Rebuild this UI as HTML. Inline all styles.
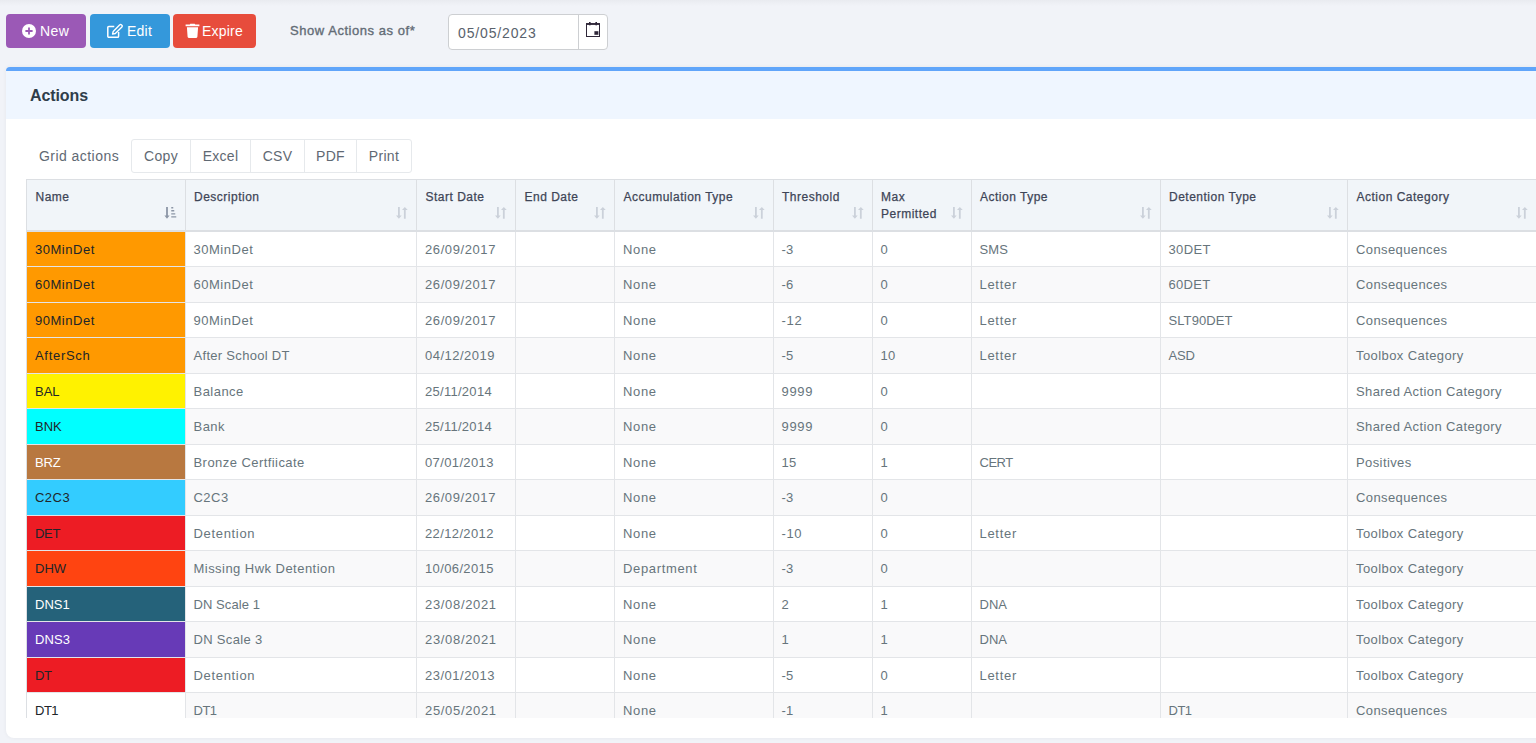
<!DOCTYPE html>
<html lang="en">
<head>
<meta charset="utf-8">
<title>Actions</title>
<style>
*{box-sizing:border-box}
html,body{margin:0;padding:0}
body{width:1536px;height:743px;overflow:hidden;background:#f1f3f8;font-family:"Liberation Sans",Arial,sans-serif;font-size:13px;color:#67757c;position:relative}
.topshade{position:absolute;left:0;top:0;width:1536px;height:6px;background:linear-gradient(#e9ebf0,#f1f3f8)}
.btn{position:absolute;top:14px;height:34px;border-radius:4px;color:#fff;font-size:14px;line-height:34px;white-space:nowrap}
.btn svg{position:absolute}
.btn span{position:absolute;top:0}
#bnew{left:6px;width:80px;background:#9b59b6}
#bedit{left:90px;width:80px;background:#3498db}
#bexp{left:173px;width:83px;background:#e74c3c}
.lbl{position:absolute;left:290px;top:22px;font-size:13px;line-height:18px;color:#636c76;-webkit-text-stroke:0.35px #636c76;letter-spacing:0.55px}
.date{position:absolute;left:448px;top:14px;width:160px;height:36px;background:#fff;border:1px solid #cdcfd2;border-radius:4px}
.date .v{position:absolute;left:9px;top:0;line-height:36px;font-size:14px;color:#59626c;letter-spacing:0.85px}
.date .sep{position:absolute;left:129px;top:0;width:1px;height:34px;background:#cdcfd2}
.date svg{position:absolute;left:136px;top:6px}
.card{position:absolute;left:6px;top:67px;width:1600px;height:671px;background:#fff;border-top:4px solid #60a5fa;box-shadow:0 0 4px rgba(0,0,0,0.05);border-radius:4px 0 0 8px;overflow:hidden}
.chead{position:absolute;left:0;top:0;width:100%;height:48px;background:#eff6ff}
.chead b{position:absolute;left:24px;top:15px;font-size:16px;line-height:20px;color:#2f3d4a;letter-spacing:-0.1px}
.ga{position:absolute;left:39px;top:139px;line-height:34px;font-size:14px;color:#5f6973;letter-spacing:0.45px}
.gbtns{position:absolute;left:131px;top:139px;height:34px;display:flex;border:1px solid #e6e9ec;border-radius:3px;background:#fff}
.gbtns div{height:32px;line-height:32px;font-size:14px;color:#5f6973;text-align:center;border-left:1px solid #e6e9ec;letter-spacing:0.3px}
.gbtns div:first-child{border-left:0}
.twrap{position:absolute;left:26px;top:179px;width:1520px;height:539px;overflow:hidden}
table.grid{border-collapse:separate;border-spacing:0;table-layout:fixed;width:1511px;border-left:1px solid #dcdfe3;border-top:1px solid #dcdfe3}
.grid th{position:relative;height:51.5px;background:#f1f5f9;border-right:1px solid #dcdfe3;border-bottom:2px solid #dcdfe3;text-align:left;vertical-align:top;padding:9px 8px 0 8.5px;font-size:12px;line-height:17px;color:#3e4557;font-weight:normal;-webkit-text-stroke:0.25px #3e4557;letter-spacing:0.5px}
.grid th .srt{position:absolute;right:8px;bottom:10.5px}
.grid th:first-child .srt{right:7.4px}
.grid td{height:35.5px;border-right:1px solid #e3e5e8;border-bottom:1px solid #e3e5e8;padding:1px 8px 0 8px;font-size:13px;line-height:33.5px;white-space:nowrap;overflow:hidden;color:#67757c;letter-spacing:0.25px}
.grid tbody tr:nth-child(even) td{background:#f9f9fa}
</style>
</head>
<body>
<div class="topshade"></div>
<div class="btn" id="bnew"><svg width="14" height="14" viewBox="0 0 14 14" style="left:16px;top:10px"><circle cx="7" cy="7" r="7" fill="#fff"/><path d="M7 3.4v7.2M3.4 7h7.2" stroke="#9b59b6" stroke-width="1.8"/></svg><span style="left:34px;letter-spacing:0.4px">New</span></div>
<div class="btn" id="bedit"><svg width="18" height="16" viewBox="0 0 18 16" style="left:17px;top:9px"><path d="M11.6 9v4.2a1.1 1.1 0 0 1-1.1 1.1h-8.6a1.1 1.1 0 0 1-1.1-1.1v-8.6a1.1 1.1 0 0 1 1.1-1.1h5.4" fill="none" stroke="#fff" stroke-width="1.5"/><path d="M5.6 11l.6-2.6 6.6-6.6a1.1 1.1 0 0 1 1.6 0l.5.5a1.1 1.1 0 0 1 0 1.6l-6.6 6.6z" fill="none" stroke="#fff" stroke-width="1.4" stroke-linejoin="round"/></svg><span style="left:37px;letter-spacing:0.25px">Edit</span></div>
<div class="btn" id="bexp"><svg width="15" height="15" viewBox="0 0 15 15" style="left:12px;top:9px"><path d="M0.6 1.6h4.2l.5-.9h4.4l.5.9h4.2v1.7h-13.8zM1.9 4.3h11.2l-.7 9.5a1.2 1.2 0 0 1-1.2 1.1h-7.4a1.2 1.2 0 0 1-1.2-1.1z" fill="#fff"/></svg><span style="left:29px;letter-spacing:0.2px">Expire</span></div>
<div class="lbl">Show Actions as of*</div>
<div class="date"><div class="v">05/05/2023</div><div class="sep"></div>
<svg width="16" height="17" viewBox="0 0 16 17"><rect x="1.5" y="2.7" width="13" height="12.8" fill="none" stroke="#2e2638" stroke-width="1"/><rect x="1" y="2.2" width="14" height="1.7" fill="#2e2638"/><rect x="4" y="1" width="1.6" height="3.3" fill="#2e2638"/><rect x="10.4" y="1" width="1.6" height="3.3" fill="#2e2638"/><rect x="9.4" y="10.2" width="4" height="3.6" fill="#2e2638"/></svg></div>
<div class="card"><div class="chead"><b>Actions</b></div></div>
<div class="ga">Grid actions</div>
<div class="gbtns"><div style="width:58px">Copy</div><div style="width:60px">Excel</div><div style="width:54px">CSV</div><div style="width:52px">PDF</div><div style="width:55px">Print</div></div>
<div class="twrap">
<table class="grid"><colgroup>
<col style="width:158.5px">
<col style="width:231.5px">
<col style="width:99px">
<col style="width:99px">
<col style="width:158.5px">
<col style="width:99px">
<col style="width:99px">
<col style="width:189px">
<col style="width:187.5px">
<col style="width:189px">
</colgroup><thead><tr>
<th><span class="ht">Name</span><svg class="srt" width="13" height="12" viewBox="0 0 13 12"><path d="M2.1 0h1.8v8.6h1.7l-2.6 3.2-2.6-3.2h1.7z" fill="#8c96a6"/><path d="M7.25 0.1h2v1.3h-2zM7.25 3.1h3v1.3h-3zM7.25 6.2h4v1.3h-4zM7.25 9.2h5v1.4h-5z" fill="#8c96a6"/></svg></th>
<th><span class="ht">Description</span><svg class="srt" width="12" height="12" viewBox="0 0 12 12"><path d="M2 0h1.8v8.6h1.9l-2.8 3.2-2.9-3.2h2zM7.9 11.8h1.8v-8.7h2l-2.85-3.1-2.85 3.1h1.9z" fill="#cbd1da"/></svg></th>
<th><span class="ht">Start Date</span><svg class="srt" width="12" height="12" viewBox="0 0 12 12"><path d="M2 0h1.8v8.6h1.9l-2.8 3.2-2.9-3.2h2zM7.9 11.8h1.8v-8.7h2l-2.85-3.1-2.85 3.1h1.9z" fill="#cbd1da"/></svg></th>
<th><span class="ht">End Date</span><svg class="srt" width="12" height="12" viewBox="0 0 12 12"><path d="M2 0h1.8v8.6h1.9l-2.8 3.2-2.9-3.2h2zM7.9 11.8h1.8v-8.7h2l-2.85-3.1-2.85 3.1h1.9z" fill="#cbd1da"/></svg></th>
<th><span class="ht">Accumulation Type</span><svg class="srt" width="12" height="12" viewBox="0 0 12 12"><path d="M2 0h1.8v8.6h1.9l-2.8 3.2-2.9-3.2h2zM7.9 11.8h1.8v-8.7h2l-2.85-3.1-2.85 3.1h1.9z" fill="#cbd1da"/></svg></th>
<th><span class="ht">Threshold</span><svg class="srt" width="12" height="12" viewBox="0 0 12 12"><path d="M2 0h1.8v8.6h1.9l-2.8 3.2-2.9-3.2h2zM7.9 11.8h1.8v-8.7h2l-2.85-3.1-2.85 3.1h1.9z" fill="#cbd1da"/></svg></th>
<th><span class="ht">Max<br>Permitted</span><svg class="srt" width="12" height="12" viewBox="0 0 12 12"><path d="M2 0h1.8v8.6h1.9l-2.8 3.2-2.9-3.2h2zM7.9 11.8h1.8v-8.7h2l-2.85-3.1-2.85 3.1h1.9z" fill="#cbd1da"/></svg></th>
<th><span class="ht">Action Type</span><svg class="srt" width="12" height="12" viewBox="0 0 12 12"><path d="M2 0h1.8v8.6h1.9l-2.8 3.2-2.9-3.2h2zM7.9 11.8h1.8v-8.7h2l-2.85-3.1-2.85 3.1h1.9z" fill="#cbd1da"/></svg></th>
<th><span class="ht">Detention Type</span><svg class="srt" width="12" height="12" viewBox="0 0 12 12"><path d="M2 0h1.8v8.6h1.9l-2.8 3.2-2.9-3.2h2zM7.9 11.8h1.8v-8.7h2l-2.85-3.1-2.85 3.1h1.9z" fill="#cbd1da"/></svg></th>
<th><span class="ht">Action Category</span><svg class="srt" width="12" height="12" viewBox="0 0 12 12"><path d="M2 0h1.8v8.6h1.9l-2.8 3.2-2.9-3.2h2zM7.9 11.8h1.8v-8.7h2l-2.85-3.1-2.85 3.1h1.9z" fill="#cbd1da"/></svg></th>
</tr></thead><tbody>
<tr>
<td class="nm" style="background:#ff9900;color:#212529;letter-spacing:0.52px">30MinDet</td>
<td style="letter-spacing:0.52px">30MinDet</td>
<td style="letter-spacing:0.59px">26/09/2017</td>
<td></td>
<td style="letter-spacing:0.64px">None</td>
<td style="letter-spacing:0.2px">-3</td>
<td style="letter-spacing:0px">0</td>
<td style="letter-spacing:0.1px">SMS</td>
<td style="letter-spacing:0.38px">30DET</td>
<td style="letter-spacing:0.39px">Consequences</td>
</tr>
<tr>
<td class="nm" style="background:#ff9900;color:#212529;letter-spacing:0.52px">60MinDet</td>
<td style="letter-spacing:0.52px">60MinDet</td>
<td style="letter-spacing:0.59px">26/09/2017</td>
<td></td>
<td style="letter-spacing:0.64px">None</td>
<td style="letter-spacing:0.2px">-6</td>
<td style="letter-spacing:0px">0</td>
<td style="letter-spacing:0.7px">Letter</td>
<td style="letter-spacing:0.28px">60DET</td>
<td style="letter-spacing:0.39px">Consequences</td>
</tr>
<tr>
<td class="nm" style="background:#ff9900;color:#212529;letter-spacing:0.52px">90MinDet</td>
<td style="letter-spacing:0.52px">90MinDet</td>
<td style="letter-spacing:0.59px">26/09/2017</td>
<td></td>
<td style="letter-spacing:0.64px">None</td>
<td style="letter-spacing:0.7px">-12</td>
<td style="letter-spacing:0px">0</td>
<td style="letter-spacing:0.7px">Letter</td>
<td style="letter-spacing:0.09px">SLT90DET</td>
<td style="letter-spacing:0.39px">Consequences</td>
</tr>
<tr>
<td class="nm" style="background:#ff9900;color:#212529;letter-spacing:0.7px">AfterSch</td>
<td style="letter-spacing:0.3px">After School DT</td>
<td style="letter-spacing:0.48px">04/12/2019</td>
<td></td>
<td style="letter-spacing:0.64px">None</td>
<td style="letter-spacing:0.2px">-5</td>
<td style="letter-spacing:0.2px">10</td>
<td style="letter-spacing:0.7px">Letter</td>
<td style="letter-spacing:-0.2px">ASD</td>
<td style="letter-spacing:0.41px">Toolbox Category</td>
</tr>
<tr>
<td class="nm" style="background:#fff200;color:#212529;letter-spacing:0px">BAL</td>
<td style="letter-spacing:0.47px">Balance</td>
<td style="letter-spacing:0.28px">25/11/2014</td>
<td></td>
<td style="letter-spacing:0.64px">None</td>
<td style="letter-spacing:0.7px">9999</td>
<td style="letter-spacing:0px">0</td>
<td></td>
<td></td>
<td style="letter-spacing:0.39px">Shared Action Category</td>
</tr>
<tr>
<td class="nm" style="background:#00ffff;color:#212529;letter-spacing:0px">BNK</td>
<td style="letter-spacing:0.46px">Bank</td>
<td style="letter-spacing:0.28px">25/11/2014</td>
<td></td>
<td style="letter-spacing:0.64px">None</td>
<td style="letter-spacing:0.7px">9999</td>
<td style="letter-spacing:0px">0</td>
<td></td>
<td></td>
<td style="letter-spacing:0.39px">Shared Action Category</td>
</tr>
<tr>
<td class="nm" style="background:#b87840;color:#ffffff;letter-spacing:-0.2px">BRZ</td>
<td style="letter-spacing:0.44px">Bronze Certfiicate</td>
<td style="letter-spacing:0.37px">07/01/2013</td>
<td></td>
<td style="letter-spacing:0.64px">None</td>
<td style="letter-spacing:0.2px">15</td>
<td style="letter-spacing:0px">1</td>
<td style="letter-spacing:-0.5px">CERT</td>
<td></td>
<td style="letter-spacing:0.4px">Positives</td>
</tr>
<tr>
<td class="nm" style="background:#33ccff;color:#212529;letter-spacing:0.46px">C2C3</td>
<td style="letter-spacing:0.46px">C2C3</td>
<td style="letter-spacing:0.59px">26/09/2017</td>
<td></td>
<td style="letter-spacing:0.64px">None</td>
<td style="letter-spacing:0.2px">-3</td>
<td style="letter-spacing:0px">0</td>
<td></td>
<td></td>
<td style="letter-spacing:0.39px">Consequences</td>
</tr>
<tr>
<td class="nm" style="background:#ed1c24;color:#212529;letter-spacing:-0.3px">DET</td>
<td style="letter-spacing:0.67px">Detention</td>
<td style="letter-spacing:0.37px">22/12/2012</td>
<td></td>
<td style="letter-spacing:0.64px">None</td>
<td style="letter-spacing:0.6px">-10</td>
<td style="letter-spacing:0px">0</td>
<td style="letter-spacing:0.7px">Letter</td>
<td></td>
<td style="letter-spacing:0.41px">Toolbox Category</td>
</tr>
<tr>
<td class="nm" style="background:#ff4411;color:#212529;letter-spacing:0px">DHW</td>
<td style="letter-spacing:0.46px">Missing Hwk Detention</td>
<td style="letter-spacing:0.37px">10/06/2015</td>
<td></td>
<td style="letter-spacing:0.65px">Department</td>
<td style="letter-spacing:0.2px">-3</td>
<td style="letter-spacing:0px">0</td>
<td></td>
<td></td>
<td style="letter-spacing:0.41px">Toolbox Category</td>
</tr>
<tr>
<td class="nm" style="background:#25627a;color:#ffffff;letter-spacing:0px">DNS1</td>
<td style="letter-spacing:0.07px">DN Scale 1</td>
<td style="letter-spacing:0.67px">23/08/2021</td>
<td></td>
<td style="letter-spacing:0.64px">None</td>
<td style="letter-spacing:0px">2</td>
<td style="letter-spacing:0px">1</td>
<td style="letter-spacing:0px">DNA</td>
<td></td>
<td style="letter-spacing:0.41px">Toolbox Category</td>
</tr>
<tr>
<td class="nm" style="background:#673ab7;color:#ffffff;letter-spacing:0.1px">DNS3</td>
<td style="letter-spacing:0.32px">DN Scale 3</td>
<td style="letter-spacing:0.67px">23/08/2021</td>
<td></td>
<td style="letter-spacing:0.64px">None</td>
<td style="letter-spacing:0px">1</td>
<td style="letter-spacing:0px">1</td>
<td style="letter-spacing:0px">DNA</td>
<td></td>
<td style="letter-spacing:0.41px">Toolbox Category</td>
</tr>
<tr>
<td class="nm" style="background:#ed1c24;color:#212529;letter-spacing:-0.5px">DT</td>
<td style="letter-spacing:0.67px">Detention</td>
<td style="letter-spacing:0.5px">23/01/2013</td>
<td></td>
<td style="letter-spacing:0.64px">None</td>
<td style="letter-spacing:0.2px">-5</td>
<td style="letter-spacing:0px">0</td>
<td style="letter-spacing:0.7px">Letter</td>
<td></td>
<td style="letter-spacing:0.41px">Toolbox Category</td>
</tr>
<tr>
<td class="nm" style="background:#ffffff;color:#212529;letter-spacing:-0.5px">DT1</td>
<td style="letter-spacing:-0.5px">DT1</td>
<td style="letter-spacing:0.67px">25/05/2021</td>
<td></td>
<td style="letter-spacing:0.64px">None</td>
<td style="letter-spacing:0.2px">-1</td>
<td style="letter-spacing:0px">1</td>
<td></td>
<td style="letter-spacing:-0.5px">DT1</td>
<td style="letter-spacing:0.39px">Consequences</td>
</tr>
</tbody></table>
</div>
</body>
</html>
